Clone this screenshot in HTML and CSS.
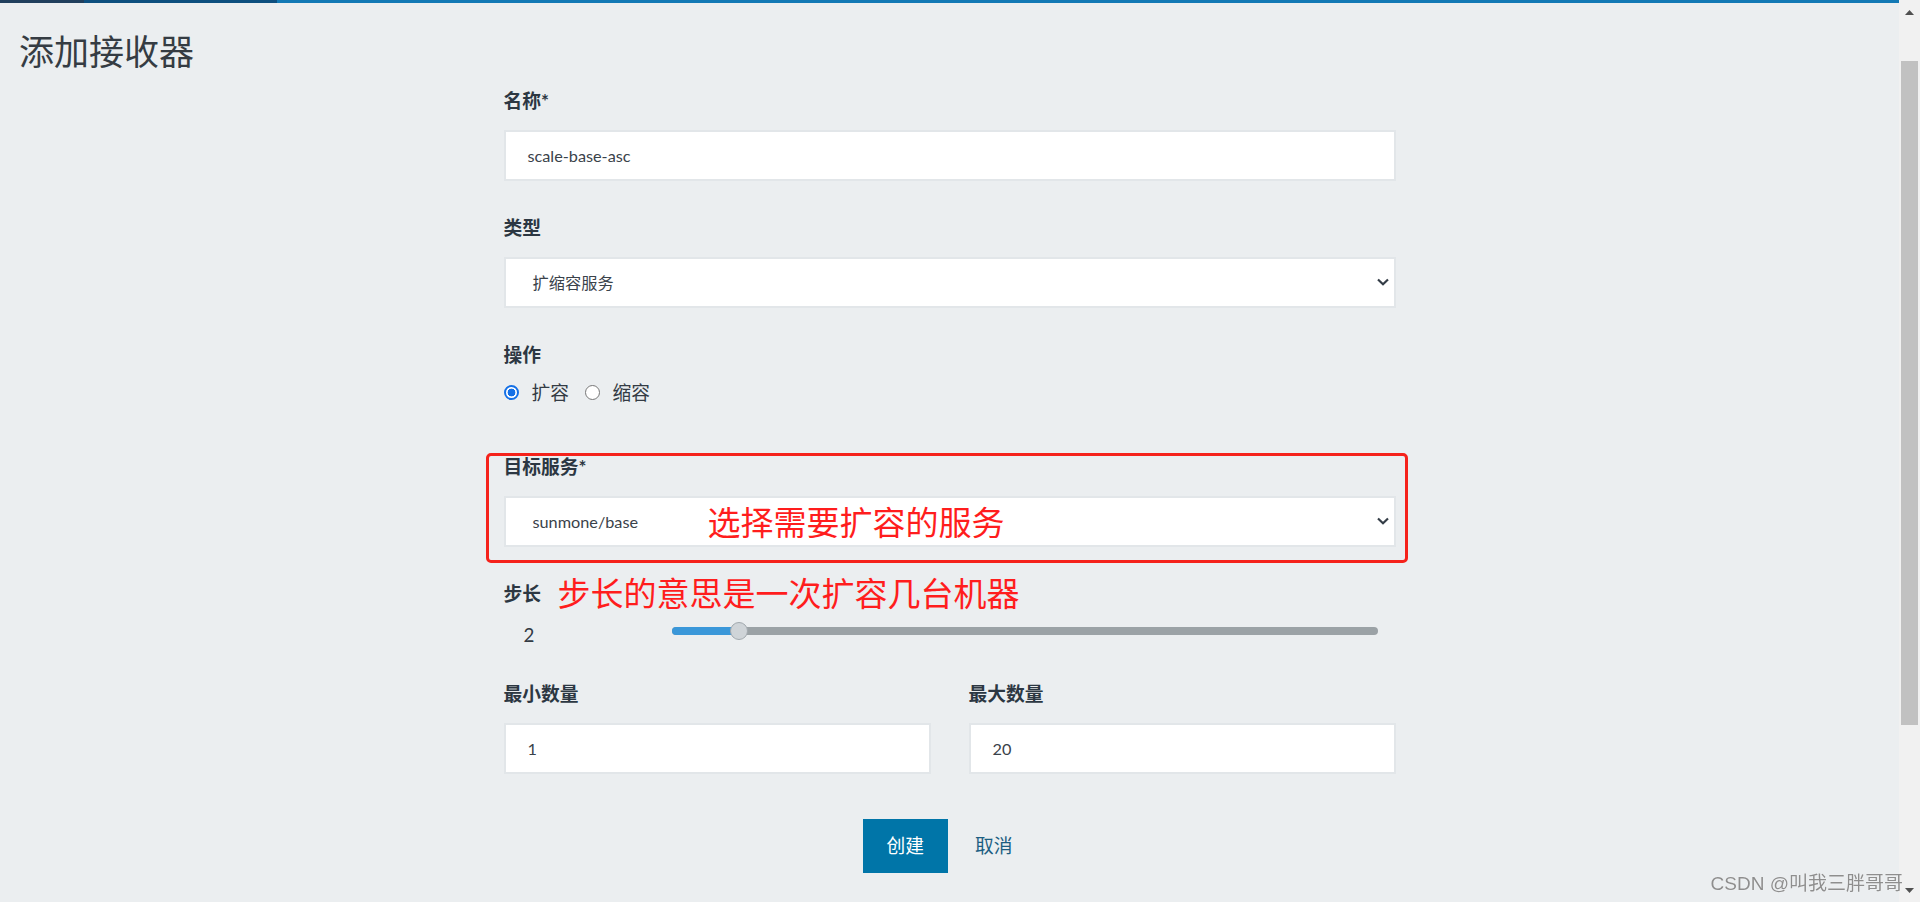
FILE: index.html
```html
<!DOCTYPE html>
<html lang="zh-CN">
<head>
<meta charset="utf-8">
<title>添加接收器</title>
<link rel="stylesheet" href="styles.css">
</head>
<body>
<div class="window">
  <div class="page">
    <div class="topbar"><span class="seg seg-a"></span><span class="seg seg-b"></span><span class="seg seg-c"></span></div>
    <h1 class="title">添加接收器</h1>
    <form class="form">
      <div class="group">
        <div class="label">名称*</div>
        <div class="field"><span>scale-base-asc</span></div>
      </div>
      <div class="group">
        <div class="label">类型</div>
        <div class="field select"><span>扩缩容服务</span><svg class="chev" width="12" height="8" viewBox="0 0 12 8"><polyline points="1,1.5 6,6.2 11,1.5" fill="none" stroke="#343d47" stroke-width="2.2"/></svg></div>
      </div>
      <div class="group group-radio">
        <div class="label label-tight">操作</div>
        <div class="radios">
          <span class="radio checked"></span><span class="radio-text">扩容</span>
          <span class="radio"></span><span class="radio-text">缩容</span>
        </div>
      </div>
      <div class="group group-target">
        <div class="label">目标服务*</div>
        <div class="field select"><span>sunmone/base</span><svg class="chev" width="12" height="8" viewBox="0 0 12 8"><polyline points="1,1.5 6,6.2 11,1.5" fill="none" stroke="#343d47" stroke-width="2.2"/></svg></div>
        <div class="note-box"></div>
        <div class="note note-target">选择需要扩容的服务</div>
      </div>
      <div class="group group-step">
        <div class="label">步长</div>
        <div class="note note-step">步长的意思是一次扩容几台机器</div>
        <div class="slider-row">
          <span class="slider-value">2</span>
          <div class="slider">
            <div class="track">
              <div class="fill" style="width:9.5%"></div>
              <span class="thumb" style="left:9.5%"></span>
            </div>
          </div>
        </div>
      </div>
      <div class="group group-range">
        <div class="range-col">
          <div class="label">最小数量</div>
          <div class="field"><span>1</span></div>
        </div>
        <div class="range-col">
          <div class="label">最大数量</div>
          <div class="field"><span>20</span></div>
        </div>
      </div>
      <div class="actions">
        <button type="button" class="btn btn-primary">创建</button>
        <button type="button" class="btn btn-link">取消</button>
      </div>
    </form>
  </div>
  <div class="scrollbar">
    <div class="sb-btn"><svg width="21" height="21" viewBox="0 0 21 21"><polygon points="6,15 15,15 10.5,10" fill="#505050"/></svg></div>
    <div class="sb-track"><div class="sb-thumb"></div></div>
    <div class="sb-btn"><svg width="21" height="21" viewBox="0 0 21 21"><polygon points="6,7 15,7 10.5,12" fill="#505050"/></svg></div>
  </div>
</div>
<div class="watermark">CSDN @叫我三胖哥哥</div>
</body>
</html>
```

FILE: styles.css
```css
html, body {
  margin: 0;
  padding: 0;
  height: 100%;
}

body {
  background: #ebeef0;
  font-family: Lato, "Noto Sans CJK SC", sans-serif;
  color: #2f3a45;
  overflow: hidden;
}

.window {
  display: flex;
  height: 902px;
}

.page {
  flex: 1;
  min-width: 0;
  display: flex;
  flex-direction: column;
}

.topbar {
  display: flex;
  height: 3px;
  flex: none;
}

.seg-a { width: 84px; background: #203f5d; }
.seg-b { width: 193px; background: #0d4f7f; }
.seg-c { flex: 1; background: #1279b5; }

.title {
  margin: 27px 0 0;
  padding-left: 19px;
  font-size: 35px;
  line-height: 42px;
  font-weight: 400;
  color: #353c43;
}

.form {
  width: 892px;
  margin: 16.5px auto 0;
}

.group {
  position: relative;
  margin-bottom: 35px;
}

.label {
  font-size: 18.75px;
  line-height: 24px;
  font-weight: 700;
  color: #2c3742;
  margin-bottom: 17px;
}

.label-tight {
  margin-bottom: 14px;
}

.field {
  display: flex;
  align-items: center;
  box-sizing: border-box;
  height: 51px;
  padding: 0 22px;
  background: #fff;
  border: 2px solid #e2e6e9;
  font-size: 16.25px;
  color: #3a424a;
}

.select {
  justify-content: space-between;
  padding: 0 5px 0 27px;
}

.chev {
  display: block;
}

.group-radio {
  margin-bottom: 50px;
}

.radios {
  display: flex;
  align-items: center;
  height: 24px;
}

.radio {
  box-sizing: border-box;
  width: 15px;
  height: 15px;
  border-radius: 50%;
  border: 1px solid #777;
  background: #fff;
  flex: none;
}

.radio.checked {
  border: 2px solid #1570e6;
  background: radial-gradient(circle, #1570e6 0 3.6px, #fff 4.2px);
}

.radio-text {
  margin-left: 13px;
  margin-right: 15.5px;
  font-size: 18.75px;
  line-height: 24px;
  color: #333b44;
}

.note-box {
  position: absolute;
  top: -2px;
  left: -17.5px;
  right: -12.5px;
  bottom: -16px;
  border: 3px solid #f5221b;
  border-radius: 5px;
  pointer-events: none;
}

.note {
  position: absolute;
  font-size: 33px;
  line-height: 40px;
  font-weight: 400;
  color: #ff1d1d;
  white-space: nowrap;
}

.note-target {
  left: 204px;
  top: 47px;
}

.note-step {
  left: 54px;
  top: -8.5px;
}

.slider-row {
  display: flex;
  align-items: center;
  height: 24px;
}

.slider-value {
  box-sizing: border-box;
  width: 168px;
  padding-left: 20px;
  font-size: 18.75px;
  line-height: 24px;
  color: #333b44;
  flex: none;
}

.slider {
  flex: 1;
  margin-right: 18px;
  margin-bottom: 8px;
}

.track {
  position: relative;
  height: 8px;
  border-radius: 4px;
  background: #9ba2a6;
}

.fill {
  height: 100%;
  border-radius: 4px 0 0 4px;
  background: #3a97d9;
}

.thumb {
  position: absolute;
  top: 50%;
  width: 18px;
  height: 18px;
  box-sizing: border-box;
  border-radius: 50%;
  border: 1px solid #a2a9ae;
  background: #cfd4d8;
  transform: translate(-50%, -50%);
}

.group-range {
  display: grid;
  grid-template-columns: 1fr 1fr;
  column-gap: 38px;
  margin-bottom: 45px;
}

.actions {
  display: flex;
  justify-content: center;
  gap: 4px;
}

.btn {
  height: 54px;
  padding: 0 23.5px;
  border: none;
  border-radius: 0;
  font-family: Lato, "Noto Sans CJK SC", sans-serif;
  font-size: 18.75px;
  line-height: 24px;
  cursor: pointer;
}

.btn-primary {
  background: #0075a8;
  color: #fff;
}

.btn-link {
  background: transparent;
  color: #1b5e82;
}

.scrollbar {
  width: 21px;
  flex: none;
  display: flex;
  flex-direction: column;
  background: #f1f1f1;
}

.sb-btn {
  height: 21px;
  flex: none;
}

.sb-btn svg {
  display: block;
}

.sb-track {
  flex: 1;
  padding-top: 40px;
}

.sb-thumb {
  height: 664px;
  margin: 0 2px;
  background: #c1c1c1;
}

.watermark {
  position: fixed;
  right: 17px;
  bottom: 6px;
  font-family: "Liberation Sans", "Noto Sans CJK SC", sans-serif;
  font-size: 19px;
  line-height: 24px;
  color: #8e8e8e;
  text-shadow: 0 0 1px #fff;
  white-space: nowrap;
}
```
